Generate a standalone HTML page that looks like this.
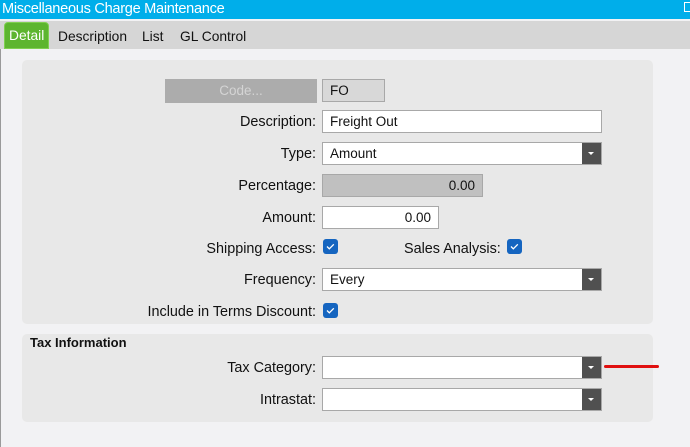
<!DOCTYPE html>
<html><head><style>
*{margin:0;padding:0;box-sizing:border-box}
body{width:690px;height:447px;overflow:hidden;background:#f2f2f4;font-family:"Liberation Sans",Arial,sans-serif;font-size:13px;color:#111;position:relative}
.a{position:absolute}
.title{left:0;top:0;width:690px;height:19px;background:#00aeea;color:#fff;font-size:14.6px;line-height:19px;padding-left:2px;letter-spacing:-0.3px}
.tabs{left:0;top:21px;width:690px;height:28px;background:#d6d6d6}
.tab{font-size:13.8px}
.det{left:4px;top:22px;width:45px;height:27px;background:#5db52f;border:1px solid #7fcf50;border-radius:4px 4px 0 0;color:#fff;padding:5px 0 0 4px;font-size:13.8px}
.panel{background:#e8e8e8;border-radius:5px}
.lbl{text-align:right;width:300px;left:16px;font-size:14.4px}
.inp{background:#fff;border:1px solid #a8a8a8;font-size:13.5px;padding:0 7px;line-height:21px}
.arr{position:absolute;right:0;top:0;width:19px;height:100%;background:#505050}
.arr:after{content:"";position:absolute;left:6px;top:9px;border-left:3px solid transparent;border-right:3px solid transparent;border-top:3px solid #fff}
.cb{width:15px;height:15px;background:#1565c0;border-radius:3px}
.cb svg{display:block}
</style></head><body>
<div class="a title">Miscellaneous Charge Maintenance</div>
<div class="a" style="right:0;top:2px;width:6px;height:10px;border:1px solid #fff;border-right:none"></div>
<div class="a tabs"></div>
<div class="a det">Detail</div>
<div class="a tab" style="left:58px;top:29px">Description</div>
<div class="a tab" style="left:142px;top:29px">List</div>
<div class="a tab" style="left:180px;top:29px">GL Control</div>
<div class="a" style="left:0;top:49px;width:1px;height:398px;background:#9a9a9a"></div>
<div class="a panel" style="left:22px;top:60px;width:631px;height:264px"></div>
<div class="a panel" style="left:22px;top:334px;width:631px;height:88px"></div>

<div class="a" style="left:165px;top:79px;width:152px;height:24px;background:#acacac;color:#d4d4d4;text-align:center;line-height:24px;font-size:13.5px">Code...</div>
<div class="a inp" style="left:322px;top:79px;width:63px;height:23px;background:#d8d8d8">FO</div>

<div class="a lbl" style="top:114px">Description:</div>
<div class="a inp" style="left:322px;top:110px;width:280px;height:23px">Freight Out</div>
<div class="a lbl" style="top:146px">Type:</div>
<div class="a inp" style="left:322px;top:142px;width:280px;height:23px">Amount<span class="arr"></span></div>
<div class="a lbl" style="top:178px">Percentage:</div>
<div class="a inp" style="left:322px;top:174px;width:161px;height:23px;background:#c0c0c0;text-align:right">0.00</div>
<div class="a lbl" style="top:210px">Amount:</div>
<div class="a inp" style="left:322px;top:206px;width:117px;height:23px;text-align:right">0.00</div>
<div class="a lbl" style="top:241px">Shipping Access:</div>
<div class="a cb" style="left:323px;top:239px"><svg width="15" height="15"><path d="M4 7.5l2.3 2.3 4.5-4.5" stroke="#fff" stroke-width="1.3" fill="none"/></svg></div>
<div class="a" style="left:404px;top:241px;font-size:14.4px">Sales Analysis:</div>
<div class="a cb" style="left:507px;top:239px"><svg width="15" height="15"><path d="M4 7.5l2.3 2.3 4.5-4.5" stroke="#fff" stroke-width="1.3" fill="none"/></svg></div>
<div class="a lbl" style="top:272px">Frequency:</div>
<div class="a inp" style="left:322px;top:268px;width:280px;height:23px">Every<span class="arr"></span></div>
<div class="a lbl" style="top:304px">Include in Terms Discount:</div>
<div class="a cb" style="left:323px;top:303px"><svg width="15" height="15"><path d="M4 7.5l2.3 2.3 4.5-4.5" stroke="#fff" stroke-width="1.3" fill="none"/></svg></div>

<div class="a" style="left:30px;top:335px;font-weight:bold;font-size:13px">Tax Information</div>
<div class="a lbl" style="top:360px">Tax Category:</div>
<div class="a inp" style="left:322px;top:356px;width:280px;height:23px"><span class="arr"></span></div>
<div class="a lbl" style="top:392px">Intrastat:</div>
<div class="a inp" style="left:322px;top:388px;width:280px;height:23px"><span class="arr"></span></div>
<div class="a" style="left:604px;top:365px;width:55px;height:3px;background:#e01010;border-radius:2px"></div>
</body></html>
